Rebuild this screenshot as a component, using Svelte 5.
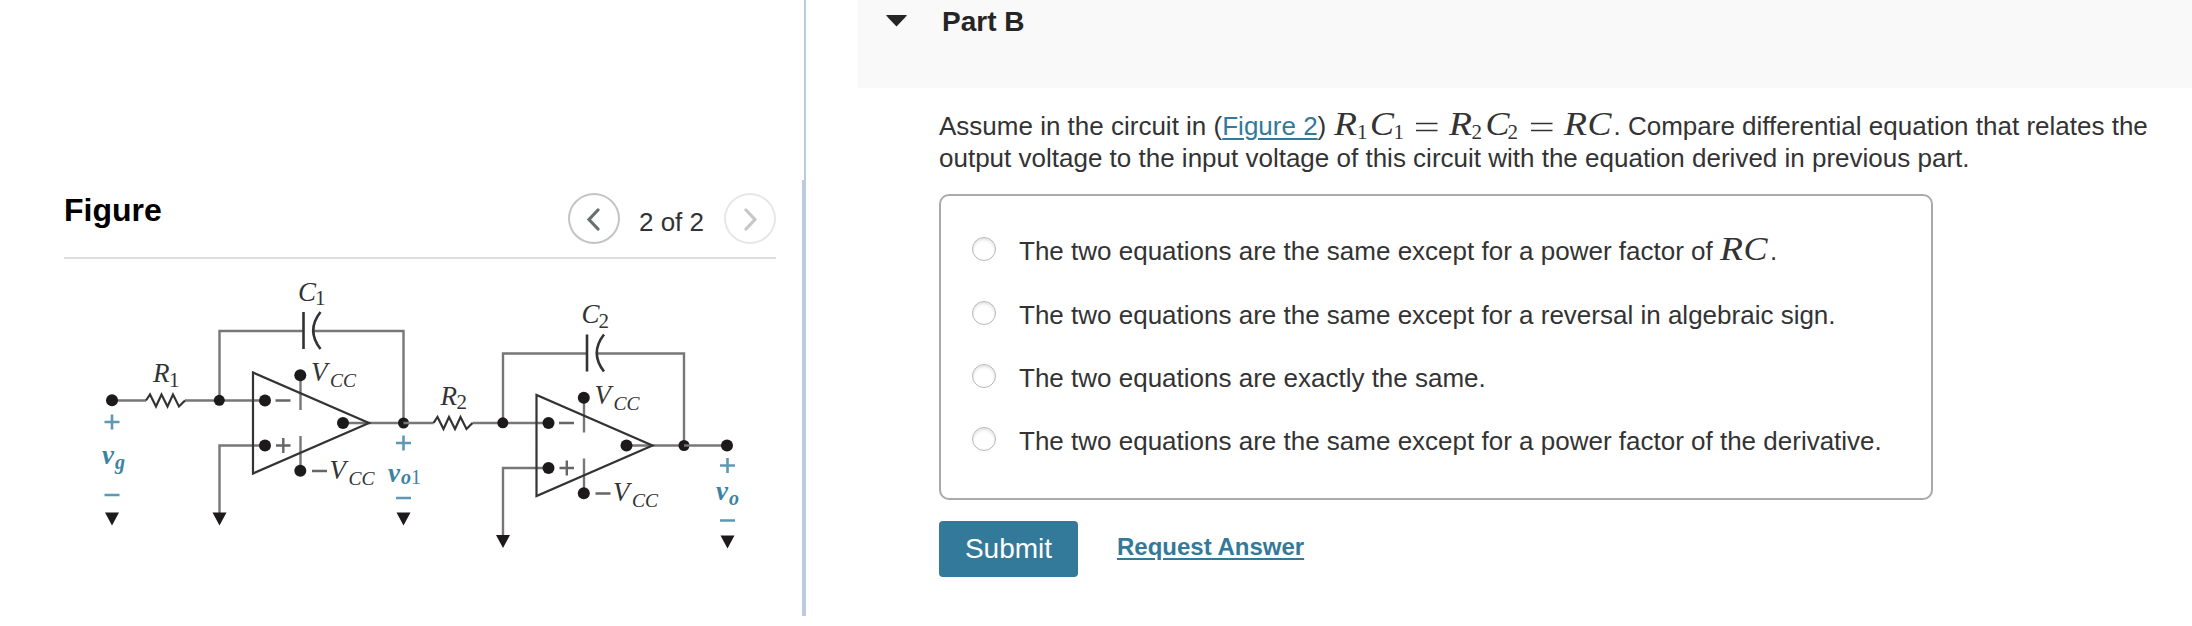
<script lang="ts">
  type Choice = { id: string; text: string; math?: boolean };

  const choices: Choice[] = [
    { id: 'power-rc', text: 'The two equations are the same except for a power factor of', math: true },
    { id: 'reversal', text: 'The two equations are the same except for a reversal in algebraic sign.' },
    { id: 'same', text: 'The two equations are exactly the same.' },
    { id: 'power-derivative', text: 'The two equations are the same except for a power factor of the derivative.' }
  ];

  // Both op-amp stages share one drawing; only the offset and a few ends differ
  const stages = [
    { n: 1, x: 0, y: 0, right: 403.5, resistorX: 146 },
    { n: 2, x: 283.5, y: 22.5, right: 400.5, resistorX: 150 }
  ];

  const ports = [
    { x: 112, plus: 422, text: 464, sub: 'g', subX: 115, subY: 469, minus: 495, arrow: 512.5 },
    { x: 403.5, plus: 443, text: 482, sub: 'o1', subX: 401, subY: 484, minus: 498, arrow: 512.5 },
    { x: 727.5, plus: 465.5, text: 500, sub: 'o', subX: 729, subY: 505, minus: 520.5, arrow: 535.5 }
  ];

  let selected = '';
</script>

{#snippet rc()}
  <svg class="math rc" width="50" height="32" viewBox="0 0 50 32" role="img" aria-label="RC">
    <g class="symbol">
      <text x="0" y="23" textLength="23" lengthAdjust="spacingAndGlyphs">R</text>
      <text x="23.5" y="23" textLength="24" lengthAdjust="spacingAndGlyphs">C</text>
    </g>
  </svg>
{/snippet}

<div class="page">
  <aside class="figure-pane">
    <header class="figure-header">
      <h2>Figure</h2>
      <div class="pager">
        <button class="round" aria-label="Previous figure">
          <svg width="14" height="24" viewBox="0 0 14 24"><path d="M12 3 L3 12.5 L12 22" /></svg>
        </button>
        <span class="count">2 of 2</span>
        <button class="round off" disabled aria-label="Next figure">
          <svg width="14" height="24" viewBox="0 0 14 24"><path d="M2 3 L11 12.5 L2 22" /></svg>
        </button>
      </div>
    </header>

    <svg class="circuit" width="712" height="300" viewBox="64 260 712 300">
      {#each stages as s}
        <g transform="translate({s.x} {s.y})">
          <path
            class="wire"
            d="M{s.n === 1 ? 112 : 120} 400.5 H{s.resistorX} M{s.resistorX + 39} 400.5 H265 M219.5 400 V331 H303.5 M313 331 H{s.right} V423 M265 445.5 H219.5 V513 M300.5 375 V410 M300.5 436 V471 M343 423 H{s.right}"
          />
          <path
            class="line"
            d="M{s.resistorX} 400.5 l4 -6 l6 12 l5.5 -12 l6 12 l5.5 -12 l6 12 l6 -6"
          />
          <path class="line" d="M253 372.5 V473.5 L369 423 Z" />
          <path class="line plate" d="M303.5 312 V349 M320.5 312 Q306 330.5 320.5 349" />
          <path class="sign" d="M275.5 400.5 h15 M276 445.5 h14.5 M283.3 438 v15 M312 471 h15" />
          <circle cx="219.3" cy="400.3" r="5.5" />
          <circle cx="265" cy="400.5" r="6" />
          <circle cx="265" cy="445.5" r="6" />
          <circle cx="300.3" cy="375.3" r="6" />
          <circle cx="300.3" cy="470.8" r="6" />
          <circle cx="343" cy="423" r="6" />
          <circle cx={s.right} cy="423" r="5.5" />
          <path d="M212.5 512.5 h14 l-7 13 z" />
          <g class="label">
            <text x="298" y="300.5">C</text>
            <text class="num" x="315" y="305">{s.n}</text>
            <text x={s.n === 1 ? 153 : 157} y="382">R</text>
            <text class="num" x={s.n === 1 ? 169 : 173} y="386.5">{s.n}</text>
            <text x="311" y="381">V</text>
            <text class="sub" x="330" y="387">CC</text>
            <text x="329.5" y="478.5">V</text>
            <text class="sub" x="348.5" y="484.5">CC</text>
          </g>
        </g>
      {/each}

      <path class="wire" d="M684 445.5 H727" />
      <circle cx="112" cy="400.3" r="6" />
      <circle cx="727" cy="445.5" r="6" />

      {#each ports as p}
        <path class="port" d="M{p.x - 7.5} {p.plus} h15 M{p.x} {p.plus - 7.5} v15 M{p.x - 7.5} {p.minus} h15" />
        <text class="volt" x={p.subX - 13} y={p.text}>v</text>
        <text class="volt volt-sub" x={p.subX} y={p.subY}>{p.sub[0]}{#if p.sub[1]}<tspan class="upright">{p.sub[1]}</tspan>{/if}</text>
        <path d="M{p.x - 7} {p.arrow} h14 l-7 13 z" />
      {/each}
    </svg>
  </aside>

  <div class="divider">
    <span class="track"></span>
    <span class="handle"></span>
  </div>

  <main class="question">
    <header class="part-header">
      <svg class="caret" width="21" height="12" viewBox="0 0 21 12"><path d="M1 0 H20 Q21.5 0 20.3 1.3 L10.5 11.5 L0.7 1.3 Q-0.5 0 1 0 Z" /></svg>
      <h2>Part B</h2>
    </header>

    <div class="body">
      <p>
        Assume in the circuit in (<a href="#figure">Figure 2</a>)
        <svg class="math eq" width="280" height="32" viewBox="0 0 280 32" role="img" aria-label="R1 C1 = R2 C2 = RC">
          <g class="symbol">
            <text x="0" y="23" textLength="23" lengthAdjust="spacingAndGlyphs">R</text>
            <text x="36" y="23" textLength="24" lengthAdjust="spacingAndGlyphs">C</text>
            <text x="115" y="23" textLength="23" lengthAdjust="spacingAndGlyphs">R</text>
            <text x="151.5" y="23" textLength="24" lengthAdjust="spacingAndGlyphs">C</text>
            <text x="230" y="23" textLength="23" lengthAdjust="spacingAndGlyphs">R</text>
            <text x="253.5" y="23" textLength="24" lengthAdjust="spacingAndGlyphs">C</text>
          </g>
          <g class="index">
            <text x="23" y="27">1</text>
            <text x="59.5" y="27">1</text>
            <text x="137.5" y="27">2</text>
            <text x="173.5" y="27">2</text>
          </g>
          <path d="M82 11.5 h21.5 M82 18.5 h21.5 M197 11.5 h21.5 M197 18.5 h21.5" />
        </svg>. Compare differential equation that relates the<br />
        output voltage to the input voltage of this circuit with the equation derived in previous part.
      </p>

      <div class="choices">
        {#each choices as choice}
          <label class="choice">
            <input type="radio" name="part-b" value={choice.id} bind:group={selected} />
            <span>{choice.text}{#if choice.math}{' '}{@render rc()}.{/if}</span>
          </label>
        {/each}
      </div>

      <div class="actions">
        <button class="submit">Submit</button>
        <a class="request" href="#answer">Request Answer</a>
      </div>
    </div>
  </main>
</div>

<style>
  :global(body) {
    background: #fff;
    overflow: hidden;
  }

  .page {
    display: flex;
    height: 626px;
    font-family: 'Liberation Sans', Arial, sans-serif;
    font-size: 26px;
    color: #333;
  }

  h2 {
    margin: 0;
  }

  .figure-pane {
    box-sizing: border-box;
    width: 802px;
    padding: 180px 26px 0 64px;
  }

  .figure-header {
    display: flex;
    box-sizing: border-box;
    height: 79px;
    justify-content: space-between;
    border-bottom: 2px solid #ddd;
  }

  .figure-header h2 {
    margin-top: 12px;
    font-size: 32px;
    line-height: 36px;
    color: #000;
  }

  .pager {
    display: flex;
    padding-top: 13px;
  }

  .round {
    display: flex;
    box-sizing: border-box;
    width: 52px;
    height: 51px;
    align-items: center;
    justify-content: center;
    padding: 0 3px 0 0;
    border: 2px solid #c4c4c4;
    border-radius: 50%;
    background: #fff;
  }

  .round path {
    fill: none;
    stroke: #6a7070;
    stroke-width: 3.2;
    stroke-linecap: round;
  }

  .round.off {
    padding: 0 0 0 2px;
    border-color: #e7e7e7;
  }

  .round.off path {
    stroke: #c7c7c7;
  }

  .count {
    box-sizing: border-box;
    width: 104px;
    padding: 14px 1px 0 0;
    line-height: 30px;
    text-align: center;
  }

  .circuit {
    display: block;
    margin-top: 1px;
    fill: #1c1a1b;
  }

  .wire,
  .line,
  .sign,
  .port {
    fill: none;
    stroke: #777;
    stroke-width: 2.4;
  }

  .line {
    stroke: #333;
    stroke-width: 2.2;
  }

  .plate {
    stroke-width: 2.6;
  }

  .sign {
    stroke: #666;
  }

  .port {
    stroke: #5e98b3;
    stroke-width: 2.6;
  }

  .label text,
  .volt {
    font-family: 'Liberation Serif', 'Times New Roman', serif;
    font-size: 27px;
    font-style: italic;
    fill: #333;
  }

  .label .num {
    font-size: 21px;
    font-style: normal;
  }

  .label .sub {
    font-size: 19.5px;
  }

  .volt {
    font-size: 27px;
    font-weight: bold;
    fill: #3c83a3;
  }

  .volt-sub {
    font-size: 20px;
  }

  .upright {
    font-style: normal;
    font-weight: normal;
  }

  .divider {
    display: flex;
    width: 4px;
    height: 616px;
    flex-direction: column;
    align-items: flex-end;
  }

  .track {
    width: 2px;
    height: 180px;
    background: #bccbdd;
  }

  .handle {
    width: 4px;
    flex: 1;
    background: #bccbdd;
  }

  .question {
    flex: 1;
    margin-left: 52px;
  }

  .part-header {
    display: flex;
    box-sizing: border-box;
    height: 88px;
    gap: 35px;
    padding-left: 28px;
    background: #f9f9f9;
  }

  .part-header h2 {
    margin-top: 6px;
    font-size: 28px;
    line-height: 32px;
    color: #252525;
  }

  .caret {
    margin-top: 15px;
    fill: #252525;
  }

  .body {
    padding: 22px 0 0 81px;
  }

  p {
    height: 84px;
    margin: 0;
    line-height: 32px;
    white-space: nowrap;
  }

  a {
    color: #33799a;
    text-decoration-thickness: 2px;
    text-underline-offset: 3px;
  }

  /* the negative bottom margin drops the subscripts below the text baseline */
  .math {
    height: 32px;
    margin: -9px 0;
    vertical-align: baseline;
    overflow: visible;
    fill: #333;
  }

  .math path {
    stroke: #333;
    stroke-width: 1.6;
  }

  .symbol,
  .index {
    font-family: 'Liberation Serif', 'Times New Roman', serif;
    font-size: 34px;
    font-style: italic;
  }

  .index {
    font-size: 21px;
    font-style: normal;
  }

  .choices {
    display: flex;
    box-sizing: border-box;
    width: 994px;
    height: 306px;
    flex-direction: column;
    gap: 33px;
    padding: 40px 31px 0;
    border: 2px solid #aaa;
    border-radius: 10px;
  }

  .choice {
    display: flex;
    height: 30px;
    gap: 23px;
    line-height: 30px;
    white-space: nowrap;
  }

  .choice:first-child {
    height: 31px;
  }

  input {
    appearance: none;
    flex: none;
    width: 24px;
    height: 24px;
    margin: 1px 0 0;
    border: 1px solid #b8b8b8;
    border-radius: 50%;
    background: #fff;
    box-shadow: inset 0 2px 3px #e2e2e2;
  }

  .actions {
    display: flex;
    gap: 39px;
    margin-top: 21px;
  }

  .submit {
    width: 139px;
    height: 56px;
    padding: 0;
    border: 0;
    border-radius: 4px;
    background: #33799a;
    font-family: inherit;
    font-size: 28px;
    color: #fff;
  }

  .request {
    margin-top: 12px;
    font-size: 24px;
    font-weight: bold;
    line-height: 28px;
  }
</style>
